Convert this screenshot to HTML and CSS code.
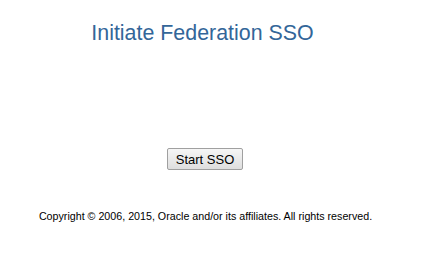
FILE: index.html
```html
<!DOCTYPE html>
<html>
<head>
<meta charset="utf-8">
<link rel="stylesheet" href="styles.css">
</head>
<body>
<div class="page">
  <h1 class="title">Initiate Federation SSO</h1>
  <div class="action">
    <button class="btn" type="button">Start SSO</button>
  </div>
  <p class="copy">Copyright © 2006, 2015, Oracle and/or its affiliates. All rights reserved.</p>
</div>
</body>
</html>
```
FILE: styles.css
```css
html, body {
  margin: 0;
  padding: 0;
  background: #ffffff;
}
body {
  font-family: "Liberation Sans", Arial, sans-serif;
}
.page {
  width: 410px;
  display: flex;
  flex-direction: column;
  align-items: center;
}
.title {
  margin: 21px 5px 0 0;
  font-size: 21.4px;
  font-weight: normal;
  color: #336699;
  line-height: 24px;
}
.action {
  margin-top: 103px;
}
.btn {
  font-family: "Liberation Sans", Arial, sans-serif;
  font-size: 13px;
  height: 22px;
  padding: 0 8px;
  border: 1px solid #a0a0a0;
  border-radius: 2px;
  background: linear-gradient(#f6f6f6, #dedede);
  color: #000;
}
.copy {
  margin: 40px 0 0 1px;
  font-size: 10.7px;
  line-height: 13px;
  color: #000;
}
```
